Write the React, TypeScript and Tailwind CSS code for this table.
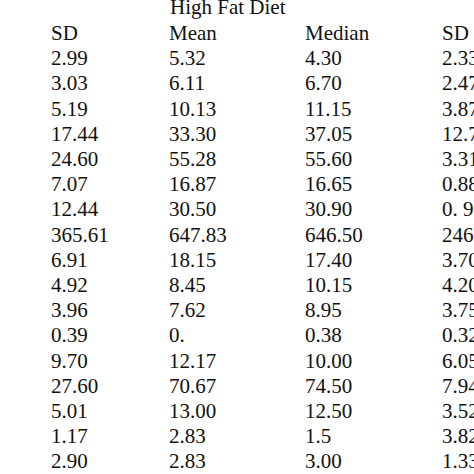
import React from "react";

const rows: string[][] = [
  ["2.99", "5.32", "4.30", "2.33"],
  ["3.03", "6.11", "6.70", "2.47"],
  ["5.19", "10.13", "11.15", "3.87"],
  ["17.44", "33.30", "37.05", "12.71"],
  ["24.60", "55.28", "55.60", "3.31"],
  ["7.07", "16.87", "16.65", "0.88"],
  ["12.44", "30.50", "30.90", "0. 90"],
  ["365.61", "647.83", "646.50", "246.1"],
  ["6.91", "18.15", "17.40", "3.70"],
  ["4.92", "8.45", "10.15", "4.20"],
  ["3.96", "7.62", "8.95", "3.75"],
  ["0.39", "0.", "0.38", "0.32"],
  ["9.70", "12.17", "10.00", "6.05"],
  ["27.60", "70.67", "74.50", "7.94"],
  ["5.01", "13.00", "12.50", "3.52"],
  ["1.17", "2.83", "1.5", "3.82"],
  ["2.90", "2.83", "3.00", "1.33"],
];

export default function App() {
  return (
    <div
      className="w-[474px] h-[474px] overflow-hidden bg-white text-[#111] text-[21px] whitespace-nowrap"
      style={{ fontFamily: '"Liberation Serif", "Times New Roman", serif' }}
    >
      <div className="-mt-[3px] pl-[170px] leading-[20px]">High Fat Diet</div>
      <div className="mt-[4px] grid grid-cols-[51px_118px_136px_137px_1fr] leading-[25.2px]">
        <div />
        <div>SD</div>
        <div>Mean</div>
        <div>Median</div>
        <div>SD</div>
        {rows.map((r, i) => (
          <React.Fragment key={i}>
            <div />
            {r.map((c, j) => (
              <div key={j}>{c}</div>
            ))}
          </React.Fragment>
        ))}
      </div>
    </div>
  );
}
